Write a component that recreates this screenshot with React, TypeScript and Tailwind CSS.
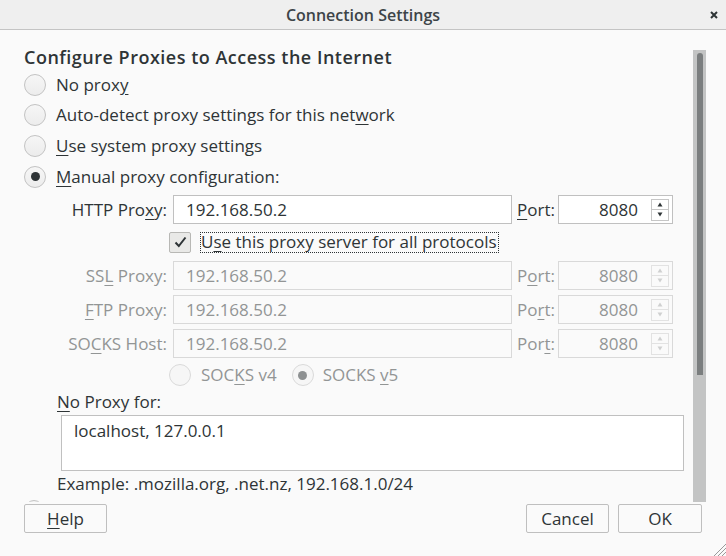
import React from "react";

const txt = "text-[#2e3436]";
const dim = "text-[#929595]";

function Radio({ checked, disabled }: { checked?: boolean; disabled?: boolean }) {
  return (
    <span
      className={`flex h-[22px] w-[22px] shrink-0 items-center justify-center rounded-full border ${
        disabled ? "border-[#dadada] bg-[#f6f6f6]" : "border-[#c3c3c3] bg-gradient-to-b from-[#f6f6f6] to-[#ececec]"
      }`}
    >
      {checked && <span className={`h-[9px] w-[9px] rounded-full ${disabled ? "bg-[#8e9192]" : "bg-[#2e3436]"}`} />}
    </span>
  );
}

function Spin({ disabled }: { disabled?: boolean }) {
  const c = disabled ? "#cfd0d0" : "#2e3436";
  const b = disabled ? "border-[#e2e2e2]" : "border-[#c6c6c6]";
  return (
    <div className="mr-[3px] flex w-[18px] flex-col">
      <div className={`flex h-[11px] items-center justify-center border ${b}`}>
        <svg width="6" height="5" viewBox="0 0 6 5">
          <path d="M3 0.5L5.5 4.5H0.5Z" fill={c} />
        </svg>
      </div>
      <div className={`flex h-[11px] items-center justify-center border border-t-0 ${b}`}>
        <svg width="6" height="5" viewBox="0 0 6 5">
          <path d="M0.5 0.5H5.5L3 4.5Z" fill={c} />
        </svg>
      </div>
    </div>
  );
}

function ProxyRow({
  label,
  port,
  disabled,
  className,
}: {
  label: React.ReactNode;
  port: React.ReactNode;
  disabled?: boolean;
  className?: string;
}) {
  const color = disabled ? dim : txt;
  const border = disabled ? "border-[#d9d9d9] bg-[#fafafa]" : "border-[#c0c0c0] bg-white";
  return (
    <div className={`flex h-[29px] items-center ${className ?? ""}`}>
      <div className={`w-[143px] text-right ${color}`}>{label}</div>
      <div className={`ml-[6px] flex h-[29px] w-[339px] items-center border pl-[12px] ${border} ${color}`}>
        192.168.50.2
      </div>
      <div className={`w-[46px] pl-[5px] ${color}`}>{port}</div>
      <div className={`flex h-[29px] w-[115px] items-center border ${border} ${color}`}>
        <span className="flex-1 pr-[13px] text-right">8080</span>
        <Spin disabled={disabled} />
      </div>
    </div>
  );
}

const U = ({ children }: { children: React.ReactNode }) => (
  <span className="underline decoration-1 underline-offset-[3px]">{children}</span>
);

export default function App() {
  return (
    <div className="relative flex h-[556px] w-[726px] flex-col overflow-hidden bg-[#fafafa] font-['Open_Sans',sans-serif] text-[17px] leading-[24px] text-[#2e3436]">
      {/* title bar */}
      <div className="relative flex h-[30px] shrink-0 items-center justify-center border-b border-[#c4c4c4] bg-[#efefef]">
        <span className="text-[16px] font-semibold text-[#3d4448]">Connection Settings</span>
        <svg className="absolute right-[8px] top-[11px]" width="8" height="8" viewBox="0 0 8 8">
          <path d="M1 1L7 7M7 1L1 7" stroke="#2e3436" strokeWidth="2" />
        </svg>
      </div>

      <div className="flex h-[472px] shrink-0">
        <div className="w-[693px] shrink-0 overflow-hidden pl-[24px] pt-[16px]">
          <div className="h-[23px] text-[18px] font-semibold leading-[23px] tracking-[0.5px]">
            Configure Proxies to Access the Internet
          </div>

          <div className="flex h-[31px] items-center gap-[10px]">
            <Radio />
            <span>
              No prox<U>y</U>
            </span>
          </div>
          <div className="flex h-[30px] items-center gap-[10px]">
            <Radio />
            <span>
              Auto-detect proxy settings for this net<U>w</U>ork
            </span>
          </div>
          <div className="flex h-[31px] items-center gap-[10px]">
            <Radio />
            <span>
              <U>U</U>se system proxy settings
            </span>
          </div>
          <div className="flex h-[31px] items-center gap-[10px]">
            <Radio checked />
            <span>
              <U>M</U>anual proxy configuration:
            </span>
          </div>

          <ProxyRow
            className="mt-[3px]"
            label={
              <>
                HTTP Pro<U>x</U>y:
              </>
            }
            port={
              <>
                <U>P</U>ort:
              </>
            }
          />

          <div className="mt-[7px] flex h-[22px] items-center pl-[145px]">
            <span className="flex h-[21px] w-[22px] items-center justify-center rounded-[2px] border border-[#b8b8b5] bg-[#e9e9e7]">
              <svg width="13" height="12" viewBox="0 0 13 12">
                <path d="M1.5 6.5L4.8 10L11.5 1.5" fill="none" stroke="#2e3436" strokeWidth="2" />
              </svg>
            </span>
            <span className="ml-[9px] flex h-[21px] items-center border border-dotted border-[#2e3436] pr-[1px] leading-[20px]">
              U<U>s</U>e this proxy server for all protocols
            </span>
          </div>

          <ProxyRow
            className="mt-[8px]"
            disabled
            label={
              <>
                SS<U>L</U> Proxy:
              </>
            }
            port={
              <>
                P<U>o</U>rt:
              </>
            }
          />
          <ProxyRow
            className="mt-[5px]"
            disabled
            label={
              <>
                <U>F</U>TP Proxy:
              </>
            }
            port={
              <>
                Po<U>r</U>t:
              </>
            }
          />
          <ProxyRow
            className="mt-[5px]"
            disabled
            label={
              <>
                SO<U>C</U>KS Host:
              </>
            }
            port={
              <>
                Por<U>t</U>:
              </>
            }
          />

          <div className={`mt-[6px] flex h-[22px] items-center pl-[145px] ${dim}`}>
            <Radio disabled />
            <span className="ml-[10px]">
              SOC<U>K</U>S v4
            </span>
            <span className="ml-[15px]">
              <Radio checked disabled />
            </span>
            <span className="ml-[9px]">
              SOCKS <U>v</U>5
            </span>
          </div>

          <div className="mt-[4px] h-[24px] pl-[33px]">
            <U>N</U>o Proxy for:
          </div>
          <div className="ml-[37px] mt-[1px] h-[56px] w-[623px] border border-[#c0c0c0] bg-white pl-[12px] pt-[3px]">
            localhost, 127.0.0.1
          </div>
          <div className="mt-px h-[24px] pl-[33px]">Example: .mozilla.org, .net.nz, 192.168.1.0/24</div>

          <div className="mt-[4px] pl-[1px]">
            <span className="block h-[18px] w-[18px] rounded-full border border-[#c3c3c3] bg-[#f3f3f3]" />
          </div>
        </div>

        <div className="mt-[20px] flex h-[452px] w-[13px] shrink-0 justify-center bg-[#c3c4c4] pt-[3px]">
          <div className="h-[322px] w-[6px] rounded-t-full rounded-b-[3px] bg-[#7b7e7f]" />
        </div>
      </div>

      <div className="flex items-start px-[24px] pt-[2px]">
        <button className="h-[29px] w-[83px] rounded-[2px] border border-[#bfbfbf] bg-[#fafafa]">
          <U>H</U>elp
        </button>
        <div className="flex-1" />
        <button className="h-[29px] w-[83px] rounded-[2px] border border-[#bfbfbf] bg-[#fafafa]">Cancel</button>
        <button className="ml-[9px] h-[29px] w-[84px] rounded-[2px] border border-[#bfbfbf] bg-[#fafafa]">OK</button>
      </div>

      <svg className="absolute bottom-0 right-0" width="15" height="15" viewBox="0 0 15 15">
        <path d="M15 3L3 15M15 7L7 15M15 11L11 15" stroke="#9a9a9a" strokeWidth="1" />
      </svg>
    </div>
  );
}
